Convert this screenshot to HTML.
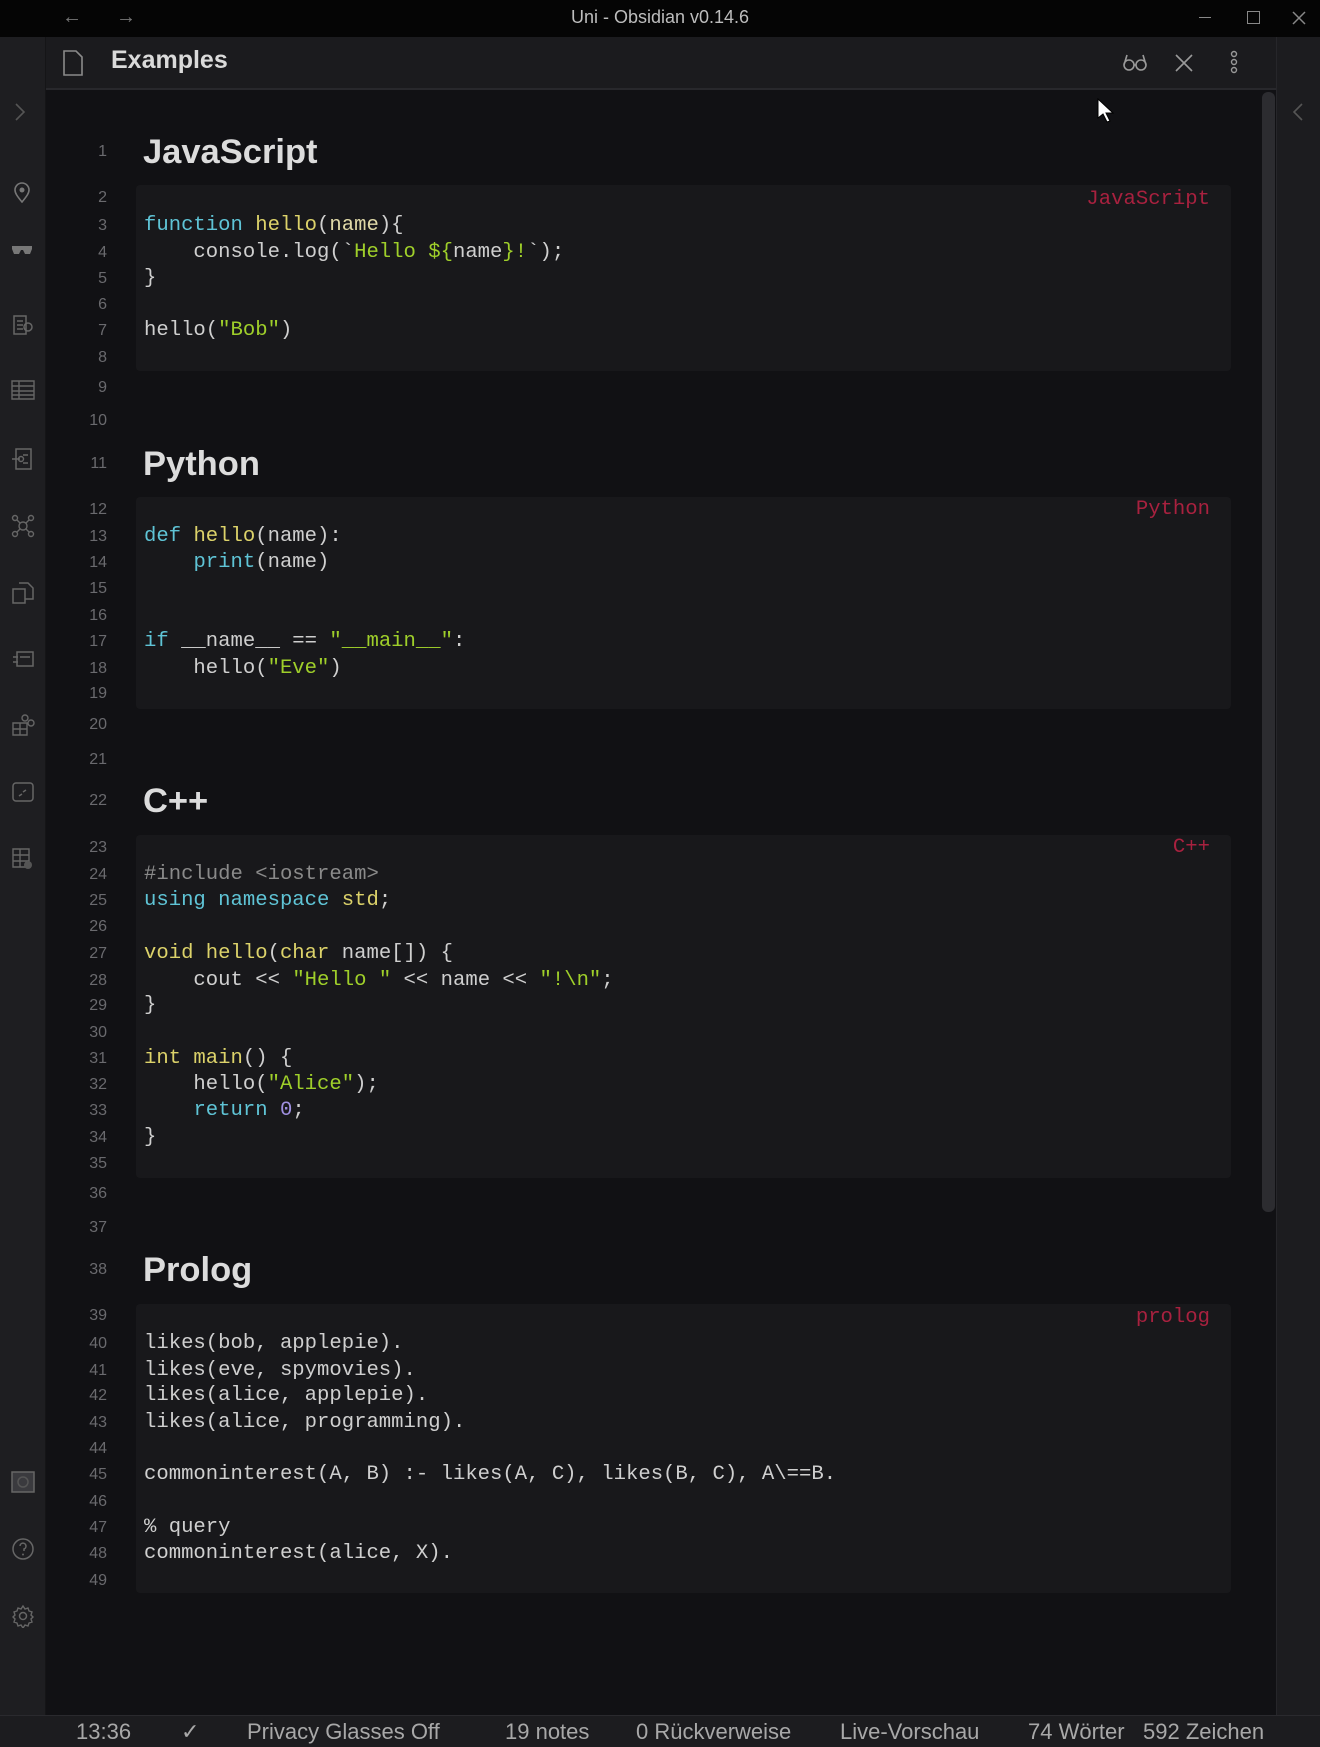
<!DOCTYPE html>
<html><head><meta charset="utf-8">
<style>
*{margin:0;padding:0;box-sizing:border-box}
body{width:1320px;height:1747px;background:#111114;position:relative;overflow:hidden;font-family:"Liberation Sans",sans-serif}
.abs{position:absolute}
.tb{left:0;top:0;width:1320px;height:37px;background:#050505}
.rib{left:0;top:37px;width:46px;height:1678px;background:#1e1e21;border-right:1px solid #151517}
.hdr{left:46px;top:37px;width:1230px;height:53px;background:#1b1b1e;border-bottom:2px solid #28282c}
.rs{left:1276px;top:37px;width:44px;height:1678px;background:#1c1c1f;border-left:1px solid #26262a}
.sb{left:0;top:1715px;width:1320px;height:32px;background:#1c1c1f;border-top:1px solid #2a2a2e;color:#a8a8a8;font-size:22px}
.sb span{position:absolute;top:3px;white-space:nowrap}
.blk{left:136px;width:1095px;background:#18181b;border-radius:4px}
.ln{position:absolute;left:60px;width:47px;text-align:right;font-size:16px;color:#6a6a6e;height:26px;line-height:26px}
.cd{position:absolute;left:144px;font-family:"Liberation Mono",monospace;font-size:20.6px;color:#cfcfcf;height:26px;line-height:26px;white-space:pre}
.h{position:absolute;left:143px;font-size:34.5px;font-weight:bold;color:#dcdcdc;height:40px;line-height:40px;white-space:nowrap}
.lab{position:absolute;right:110px;font-family:"Liberation Mono",monospace;font-size:20.6px;color:#a8213f;height:26px;line-height:26px}
.k{color:#5fc4d6}.f{color:#dcd26a}.s{color:#9fcf2a}.c{color:#8a8a8a}.n{color:#9f8fe0}.p{color:#e0d9a8}
.ic{position:absolute;left:11px}
</style></head><body>
<div class="abs tb"></div>
<div class="abs" style="left:62px;top:6px;color:#777;font-size:20px">&#8592;</div>
<div class="abs" style="left:116px;top:6px;color:#777;font-size:20px">&#8594;</div>
<div class="abs" style="left:0;width:1320px;top:7px;text-align:center;color:#bdbdbd;font-size:18px">Uni - Obsidian v0.14.6</div>
<div class="abs" style="left:1199px;top:17px;width:12px;height:1px;background:#888"></div>
<div class="abs" style="left:1247px;top:11px;width:13px;height:13px;border:1.5px solid #888"></div>
<svg class="abs" style="left:1292px;top:11px" width="14" height="14"><path d="M1 1L13 13M13 1L1 13" stroke="#888" stroke-width="1.5"/></svg>

<div class="abs rib"></div>
<div class="abs hdr"></div>
<div class="abs rs"></div>
<svg class="abs" style="left:62px;top:50px" width="22" height="26"><path d="M2 1h12l6 6v18H2z" fill="none" stroke="#8a8a8a" stroke-width="1.6"/></svg>
<div class="abs" style="left:111px;top:46px;font-size:25px;font-weight:bold;color:#dadada">Examples</div>
<svg class="abs" style="left:1121px;top:52px" width="28" height="22"><path d="M3 13a5 5 0 1 0 10 0a5 5 0 1 0-10 0M15 13a5 5 0 1 0 10 0a5 5 0 1 0-10 0M13 13h2M3 13L6 3M25 13L22 3" fill="none" stroke="#9a9a9a" stroke-width="1.6"/></svg>
<svg class="abs" style="left:1175px;top:54px" width="18" height="18"><path d="M1 1L17 17M17 1L1 17" stroke="#9a9a9a" stroke-width="1.6"/></svg>
<svg class="abs" style="left:1228px;top:50px" width="12" height="26"><circle cx="6" cy="4" r="2.5" fill="none" stroke="#999" stroke-width="1.4"/><circle cx="6" cy="12" r="2.5" fill="none" stroke="#999" stroke-width="1.4"/><circle cx="6" cy="20" r="2.5" fill="none" stroke="#999" stroke-width="1.4"/></svg>
<svg class="abs" style="left:14px;top:102px" width="12" height="20"><path d="M2 2l8 8-8 8" fill="none" stroke="#555" stroke-width="1.6"/></svg>
<svg class="abs" style="left:1292px;top:102px" width="12" height="20"><path d="M10 2l-8 8 8 8" fill="none" stroke="#555" stroke-width="1.6"/></svg>
<div class="abs" style="left:1262px;top:92px;width:13px;height:1120px;background:#2c2c30;border-radius:6px"></div>
<svg class="abs" style="left:1096px;top:98px" width="18" height="26"><path d="M2 1v19l5-4 4 8 3-1-4-8h7z" fill="#fff" stroke="#000" stroke-width="1"/></svg>

<!-- ribbon icons -->
<svg class="ic" style="top:181px" width="22" height="22"><path d="M11 21c-5-6-7-9-7-12a7 7 0 0 1 14 0c0 3-2 6-7 12z" fill="none" stroke="#777" stroke-width="1.6"/><circle cx="11" cy="9" r="2.5" fill="#777"/></svg>
<svg class="ic" style="top:244px" width="22" height="14"><path d="M1 2h20v3l-2 5h-5l-2-4h-2l-2 4H3L1 5z" fill="#777"/></svg>
<svg class="ic" style="top:313px" width="24" height="24"><path d="M3 3h12v18H3zM6 8h6M6 12h6M6 16h6" fill="none" stroke="#666" stroke-width="1.5"/><circle cx="17" cy="14" r="4" fill="none" stroke="#666" stroke-width="1.5"/></svg>
<svg class="ic" style="top:380px" width="24" height="20"><path d="M1 1h22v18H1zM1 6h22M1 11h22M1 15h22M8 1v18" fill="none" stroke="#666" stroke-width="1.4"/></svg>
<svg class="ic" style="top:447px" width="24" height="24"><path d="M5 2h15v20H5zM1 12h8M12 8h5M12 16h5" fill="none" stroke="#666" stroke-width="1.5"/><circle cx="10" cy="12" r="2.5" fill="none" stroke="#666" stroke-width="1.4"/></svg>
<svg class="ic" style="top:514px" width="24" height="24"><circle cx="12" cy="12" r="4" fill="none" stroke="#666" stroke-width="1.4"/><circle cx="4" cy="4" r="2.5" fill="none" stroke="#666" stroke-width="1.4"/><circle cx="20" cy="4" r="2.5" fill="none" stroke="#666" stroke-width="1.4"/><circle cx="4" cy="20" r="2.5" fill="none" stroke="#666" stroke-width="1.4"/><circle cx="20" cy="20" r="2.5" fill="none" stroke="#666" stroke-width="1.4"/><path d="M6 6l3 3M18 6l-3 3M6 18l3-3M18 18l-3-3" stroke="#666" stroke-width="1.4"/></svg>
<svg class="ic" style="top:581px" width="24" height="24"><path d="M2 8h12v14H2zM8 2h9l5 5v11h-8" fill="none" stroke="#666" stroke-width="1.5"/></svg>
<svg class="ic" style="top:650px" width="24" height="20"><path d="M6 2h16v14H6zM2 7h5M2 12h5M9 7h10" fill="none" stroke="#666" stroke-width="1.5"/></svg>
<svg class="ic" style="top:713px" width="24" height="24"><path d="M2 10h14v12H2zM2 16h14M9 10v12" fill="none" stroke="#666" stroke-width="1.4"/><circle cx="14" cy="5" r="3" fill="none" stroke="#666" stroke-width="1.4"/><circle cx="20" cy="10" r="3" fill="none" stroke="#666" stroke-width="1.4"/></svg>
<svg class="ic" style="top:780px" width="24" height="24"><rect x="2" y="3" width="20" height="18" rx="3" fill="none" stroke="#666" stroke-width="1.5"/><path d="M8 16l3-2M12 12l3-2" stroke="#666" stroke-width="1.5"/></svg>
<svg class="ic" style="top:847px" width="24" height="24"><path d="M2 2h16v18H2zM2 8h16M2 14h16M9 2v18" fill="none" stroke="#666" stroke-width="1.4"/><circle cx="17" cy="18" r="4" fill="#555"/></svg>
<svg class="ic" style="top:1471px" width="24" height="22"><rect x="1" y="1" width="22" height="20" fill="#3a3a3e" stroke="#666" stroke-width="1.5"/><circle cx="12" cy="11" r="5" fill="none" stroke="#555" stroke-width="1.5"/></svg>
<svg class="ic" style="top:1537px" width="24" height="24"><circle cx="12" cy="12" r="10" fill="none" stroke="#666" stroke-width="1.5"/><path d="M9 9a3 3 0 1 1 4 3v2" fill="none" stroke="#666" stroke-width="1.5"/><circle cx="12" cy="17.5" r="1" fill="#666"/></svg>
<svg class="ic" style="top:1604px" width="24" height="24"><circle cx="12" cy="12" r="3.5" fill="none" stroke="#666" stroke-width="1.5"/><path d="M12 2l2 3 3-1 1 3 3 1-1 3 2 2-2 2 1 3-3 1-1 3-3-1-2 3-2-3-3 1-1-3-3-1 1-3-2-2 2-2-1-3 3-1 1-3 3 1z" fill="none" stroke="#666" stroke-width="1.4"/></svg>

<!-- code blocks -->
<div class="abs blk" style="top:185px;height:186px"></div>
<div class="abs blk" style="top:497px;height:212px"></div>
<div class="abs blk" style="top:835px;height:343px"></div>
<div class="abs blk" style="top:1304px;height:289px"></div>

<!-- line numbers -->
<div class="ln" style="top:139px">1</div>
<div class="ln" style="top:185px">2</div>
<div class="ln" style="top:213px">3</div>
<div class="ln" style="top:240px">4</div>
<div class="ln" style="top:266px">5</div>
<div class="ln" style="top:292px">6</div>
<div class="ln" style="top:318px">7</div>
<div class="ln" style="top:345px">8</div>
<div class="ln" style="top:375px">9</div>
<div class="ln" style="top:408px">10</div>
<div class="ln" style="top:451px">11</div>
<div class="ln" style="top:497px">12</div>
<div class="ln" style="top:524px">13</div>
<div class="ln" style="top:550px">14</div>
<div class="ln" style="top:576px">15</div>
<div class="ln" style="top:603px">16</div>
<div class="ln" style="top:629px">17</div>
<div class="ln" style="top:656px">18</div>
<div class="ln" style="top:681px">19</div>
<div class="ln" style="top:712px">20</div>
<div class="ln" style="top:747px">21</div>
<div class="ln" style="top:788px">22</div>
<div class="ln" style="top:835px">23</div>
<div class="ln" style="top:862px">24</div>
<div class="ln" style="top:888px">25</div>
<div class="ln" style="top:914px">26</div>
<div class="ln" style="top:941px">27</div>
<div class="ln" style="top:968px">28</div>
<div class="ln" style="top:993px">29</div>
<div class="ln" style="top:1020px">30</div>
<div class="ln" style="top:1046px">31</div>
<div class="ln" style="top:1072px">32</div>
<div class="ln" style="top:1098px">33</div>
<div class="ln" style="top:1125px">34</div>
<div class="ln" style="top:1151px">35</div>
<div class="ln" style="top:1181px">36</div>
<div class="ln" style="top:1215px">37</div>
<div class="ln" style="top:1257px">38</div>
<div class="ln" style="top:1303px">39</div>
<div class="ln" style="top:1331px">40</div>
<div class="ln" style="top:1358px">41</div>
<div class="ln" style="top:1383px">42</div>
<div class="ln" style="top:1410px">43</div>
<div class="ln" style="top:1436px">44</div>
<div class="ln" style="top:1462px">45</div>
<div class="ln" style="top:1489px">46</div>
<div class="ln" style="top:1515px">47</div>
<div class="ln" style="top:1541px">48</div>
<div class="ln" style="top:1568px">49</div>

<!-- headings -->
<div class="h" style="top:132px">JavaScript</div>
<div class="h" style="top:444px">Python</div>
<div class="h" style="top:781px">C++</div>
<div class="h" style="top:1250px">Prolog</div>

<!-- labels -->
<div class="lab" style="top:187px">JavaScript</div>
<div class="lab" style="top:497px">Python</div>
<div class="lab" style="top:835px">C++</div>
<div class="lab" style="top:1305px">prolog</div>

<!-- JS -->
<div class="cd" style="top:213px"><span class="k">function</span> <span class="f">hello</span>(<span class="p">name</span>){</div>
<div class="cd" style="top:240px">    console.log(`<span class="s">Hello ${</span>name<span class="s">}!</span>`);</div>
<div class="cd" style="top:266px">}</div>
<div class="cd" style="top:318px">hello(<span class="s">"Bob"</span>)</div>
<!-- Python -->
<div class="cd" style="top:524px"><span class="k">def</span> <span class="f">hello</span>(name):</div>
<div class="cd" style="top:550px">    <span class="k">print</span>(name)</div>
<div class="cd" style="top:629px"><span class="k">if</span> __name__ == <span class="s">"__main__"</span>:</div>
<div class="cd" style="top:656px">    hello(<span class="s">"Eve"</span>)</div>
<!-- C++ -->
<div class="cd" style="top:862px"><span class="c">#include &lt;iostream&gt;</span></div>
<div class="cd" style="top:888px"><span class="k">using namespace</span> <span class="f">std</span>;</div>
<div class="cd" style="top:941px"><span class="f">void hello</span>(<span class="f">char</span> name[]) {</div>
<div class="cd" style="top:968px">    cout &lt;&lt; <span class="s">"Hello "</span> &lt;&lt; name &lt;&lt; <span class="s">"!\n"</span>;</div>
<div class="cd" style="top:993px">}</div>
<div class="cd" style="top:1046px"><span class="f">int main</span>() {</div>
<div class="cd" style="top:1072px">    hello(<span class="s">"Alice"</span>);</div>
<div class="cd" style="top:1098px">    <span class="k">return</span> <span class="n">0</span>;</div>
<div class="cd" style="top:1125px">}</div>
<!-- Prolog -->
<div class="cd" style="top:1331px">likes(bob, applepie).</div>
<div class="cd" style="top:1358px">likes(eve, spymovies).</div>
<div class="cd" style="top:1383px">likes(alice, applepie).</div>
<div class="cd" style="top:1410px">likes(alice, programming).</div>
<div class="cd" style="top:1462px">commoninterest(A, B) :- likes(A, C), likes(B, C), A\==B.</div>
<div class="cd" style="top:1515px">% query</div>
<div class="cd" style="top:1541px">commoninterest(alice, X).</div>

<div class="abs sb">
<span style="left:76px">13:36</span>
<span style="left:181px">&#10003;</span>
<span style="left:247px">Privacy Glasses Off</span>
<span style="left:505px">19 notes</span>
<span style="left:636px">0 Rückverweise</span>
<span style="left:840px">Live-Vorschau</span>
<span style="left:1028px">74 Wörter</span>
<span style="left:1143px">592 Zeichen</span>
</div>
</body></html>
